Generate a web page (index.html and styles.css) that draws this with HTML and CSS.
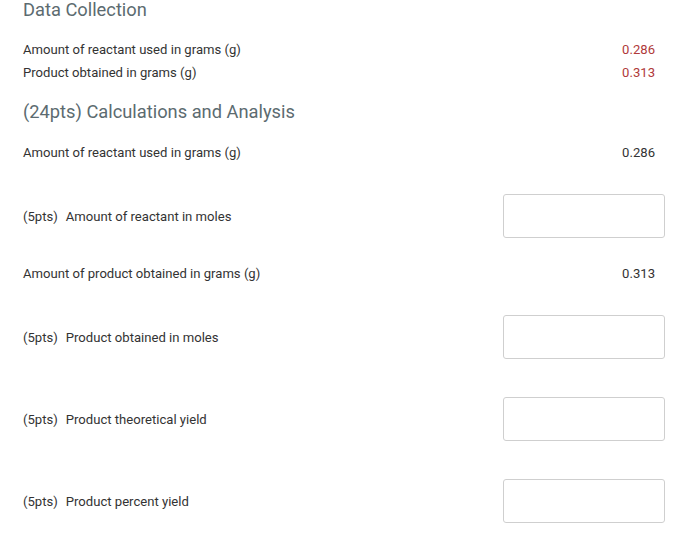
FILE: index.html
```html
<!DOCTYPE html>
<html>
<head>
<meta charset="utf-8">
<link rel="stylesheet" href="styles.css">
</head>
<body>
<div class="page">
  <h2 class="section-title first">Data Collection</h2>
  <div class="data-list">
    <div class="data-row"><span class="label">Amount of reactant used in grams (g)</span><span class="value red">0.286</span></div>
    <div class="data-row"><span class="label">Product obtained in grams (g)</span><span class="value red">0.313</span></div>
  </div>
  <h2 class="section-title second">(24pts) Calculations and Analysis</h2>
  <div class="calc">
    <div class="row text-row first-row"><span class="label">Amount of reactant used in grams (g)</span><span class="value">0.286</span></div>
    <div class="row box-row after-text"><span class="label"><span class="pts">(5pts)</span>Amount of reactant in moles</span><span class="answer"></span></div>
    <div class="row text-row after-box"><span class="label">Amount of product obtained in grams (g)</span><span class="value">0.313</span></div>
    <div class="row box-row after-text"><span class="label"><span class="pts">(5pts)</span>Product obtained in moles</span><span class="answer"></span></div>
    <div class="row box-row after-boxrow"><span class="label"><span class="pts">(5pts)</span>Product theoretical yield</span><span class="answer"></span></div>
    <div class="row box-row after-boxrow"><span class="label"><span class="pts">(5pts)</span>Product percent yield</span><span class="answer"></span></div>
  </div>
</div>
</body>
</html>
```

FILE: styles.css
```css
html, body {
  margin: 0;
  padding: 0;
  background: #ffffff;
}
body {
  font-family: Roboto, "Liberation Sans", Arial, sans-serif;
  color: #333333;
}
.page {
  padding: 0 35px 0 23px;
}
.section-title {
  font-weight: 400;
  font-size: 18.3px;
  line-height: 21px;
  color: #5c6b70;
  margin: 0;
}
.section-title.first {
  margin-top: -1px;
}
.section-title.second {
  margin-top: 17px;
}
.data-list {
  margin-top: 18px;
}
.data-row, .row {
  display: flex;
  justify-content: space-between;
  align-items: center;
  font-size: 13.1px;
}
.data-row {
  height: 23px;
}
.value {
  margin-right: 10px;
}
.red {
  color: #b03a3a;
}
.text-row {
  height: 23px;
}
.box-row {
  height: 44px;
}
.first-row {
  margin-top: 19px;
}
.after-text {
  margin-top: 30px;
}
.after-box {
  margin-top: 24px;
}
.after-boxrow {
  margin-top: 38px;
}
.pts {
  margin-right: 8px;
}
.answer {
  display: block;
  width: 160px;
  height: 42px;
  border: 1px solid #cfcfcf;
  border-radius: 3px;
  background: #fff;
}
```
